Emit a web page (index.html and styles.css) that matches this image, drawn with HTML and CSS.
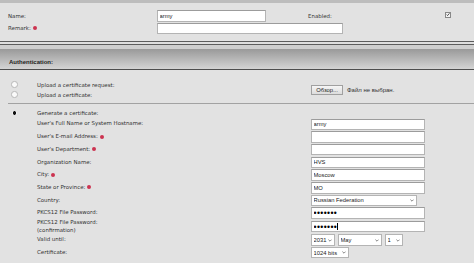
FILE: index.html
```html
<!DOCTYPE html>
<html lang="en">
<head>
    <meta charset="UTF-8">
    <meta name="viewport" content="width=device-width, initial-scale=1.0">
    <title>Certificate</title>
    <link rel="stylesheet" href="styles.css">
</head>
<body>
    <div class="top-strip"></div>
    <!-- общие -->
    <div class="general">
        <div class="row">
            <label class="g-label">Name:</label>
            <input class="field name-field" type="text" value="army">
            <label class="enabled-label">Enabled:</label>
            <span class="checkbox">
                <svg width="5" height="5" viewBox="0 0 5 5"><path d="M0.8 2.6 L2 3.8 L4.3 1" fill="none" stroke="#111" stroke-width="0.9"/></svg>
            </span>
        </div>
        <div class="row">
            <label class="g-label">Remark: <span class="req"></span></label>
            <input class="field remark-field" type="text" value="">
        </div>
    </div>
    <div class="divider"></div>
    <div class="section-head">Authentication:</div>

    <div class="auth">
        <div class="upload">
            <div class="choices">
                <div class="choice">
                    <span class="radio-cell"><input class="radio" type="radio" name="auth"></span>
                    <span>Upload a certificate request:</span>
                </div>
                <div class="choice">
                    <span class="radio-cell"><input class="radio" type="radio" name="auth"></span>
                    <span>Upload a certificate:</span>
                </div>
            </div>
            <div class="file">
                <button class="file-btn">Обзор...</button>
                <span class="file-name">Файл не выбран.</span>
            </div>
        </div>
        <div class="sep"></div>
        <div class="choice gen">
            <span class="radio-cell"><input class="radio" type="radio" name="auth" checked></span>
            <span>Generate a certificate:</span>
        </div>

        <div class="frow">
            <label class="f-label">User's Full Name or System Hostname:</label>
            <input class="field wide" type="text" value="army">
        </div>
        <div class="frow">
            <label class="f-label">User's E-mail Address: <span class="req"></span></label>
            <input class="field wide" type="text" value="">
        </div>
        <div class="frow">
            <label class="f-label">User's Department: <span class="req"></span></label>
            <input class="field wide" type="text" value="">
        </div>
        <div class="frow">
            <label class="f-label">Organization Name:</label>
            <input class="field wide" type="text" value="HVS">
        </div>
        <div class="frow">
            <label class="f-label">City: <span class="req"></span></label>
            <input class="field wide" type="text" value="Moscow">
        </div>
        <div class="frow">
            <label class="f-label">State or Province: <span class="req"></span></label>
            <input class="field wide" type="text" value="MO">
        </div>
        <div class="frow">
            <label class="f-label">Country:</label>
            <span class="sel country">
                <select><option>Russian Federation</option></select>
                <svg class="chev" width="4" height="3" viewBox="0 0 4 3"><path d="M0.4 0.6 L2 2.2 L3.6 0.6" fill="none" stroke="#555" stroke-width="0.7"/></svg>
            </span>
        </div>
        <div class="frow">
            <label class="f-label">PKCS12 File Password:</label>
            <input class="field wide pass" type="password" value="1234567">
        </div>
        <div class="frow tall">
            <label class="f-label">PKCS12 File Password:<br>(confirmation)</label>
            <span class="pass-wrap">
                <input class="field wide pass" type="password" value="1234567">
                <span class="caret"></span>
            </span>
        </div>
        <div class="frow">
            <label class="f-label">Valid until:</label>
            <span class="sel year">
                <select><option>2031</option></select>
                <svg class="chev" width="4" height="3" viewBox="0 0 4 3"><path d="M0.4 0.6 L2 2.2 L3.6 0.6" fill="none" stroke="#555" stroke-width="0.7"/></svg>
            </span>
            <span class="sel month">
                <select><option>May</option></select>
                <svg class="chev" width="4" height="3" viewBox="0 0 4 3"><path d="M0.4 0.6 L2 2.2 L3.6 0.6" fill="none" stroke="#555" stroke-width="0.7"/></svg>
            </span>
            <span class="sel day">
                <select><option>1</option></select>
                <svg class="chev" width="4" height="3" viewBox="0 0 4 3"><path d="M0.4 0.6 L2 2.2 L3.6 0.6" fill="none" stroke="#555" stroke-width="0.7"/></svg>
            </span>
        </div>
        <div class="frow">
            <label class="f-label">Certificate:</label>
            <span class="sel bits">
                <select><option>1024 bits</option></select>
                <svg class="chev" width="4" height="3" viewBox="0 0 4 3"><path d="M0.4 0.6 L2 2.2 L3.6 0.6" fill="none" stroke="#555" stroke-width="0.7"/></svg>
            </span>
        </div>
    </div>
</body>
</html>
```

FILE: styles.css
```css
* {
    margin: 0;
    padding: 0;
    box-sizing: border-box;
}
body {
    background-color: #e2e2e2;
    font-family: "DejaVu Sans", Verdana, sans-serif;
    font-size: 5.45px;
    color: #333;
    overflow: hidden;
}
.top-strip {
    height: 3px;
    background-color: #bdbdbd;
}
/* общие */
.general {
    height: 38px;
    padding: 6.5px 0 0 8px;
}
.row {
    display: flex;
    align-items: center;
    height: 12.5px;
}
.g-label {
    flex: none;
    width: 149px;
    display: flex;
    align-items: center;
}
.field {
    flex: none;
    height: 11.5px;
    border: 1px solid #b4b4b4;
    border-top-color: #9c9c9c;
    background-color: #fff;
    font-family: "Liberation Sans", Arial, sans-serif;
    font-size: 5.8px;
    color: #222;
    padding-left: 1.5px;
    outline: none;
}
.name-field {
    width: 109px;
}
.remark-field {
    width: 186px;
}
.enabled-label {
    flex: none;
    margin-left: 42px;
    width: 137px;
}
.checkbox {
    flex: none;
    width: 6px;
    height: 6px;
    border: 0.7px solid #888;
    background-color: #f4f4f4;
    display: flex;
    align-items: center;
    justify-content: center;
    margin-top: -2px;
}
.req {
    display: inline-block;
    width: 4px;
    height: 4px;
    margin-left: 2px;
    border-radius: 50%;
    background-color: #cc3350;
    position: relative;
    top: -0.5px;
}
/* разделитель */
.divider {
    height: 8px;
    background: linear-gradient(to bottom,
        #5c5c5c 0, #5c5c5c 1.5px,
        #dedede 1.5px, #dedede 3px,
        #5c5c5c 3px, #5c5c5c 4.5px,
        #cecece 4.5px, #cecece 8px);
}
.section-head {
    height: 21px;
    padding: 5.5px 0 0 9px;
    display: flex;
    align-items: center;
    background: linear-gradient(to bottom, #999, #d4d4d4);
    border-bottom: 1px solid #4e4e4e;
    font-family: "Liberation Sans", Arial, sans-serif;
    font-weight: bold;
    font-size: 6px;
    color: #1e1e1e;
}
/* авторизация */
.auth {
    padding: 9.5px 0 0 8px;
}
.upload {
    display: flex;
    align-items: center;
}
.choices {
    width: 303px;
}
.choice {
    display: flex;
    align-items: center;
    height: 10px;
}
.radio-cell {
    width: 29px;
    display: flex;
    padding-left: 3px;
}
.radio {
    appearance: none;
    width: 6.5px;
    height: 6.5px;
    border-radius: 50%;
    border: 0.7px solid #b8b8b8;
    background-color: #fafafa;
}
.radio:checked {
    border-color: #e2e2e2;
    background: radial-gradient(circle, #111 0, #111 1.6px, #f2f2f2 2px);
}
.file {
    display: flex;
    align-items: center;
    font-family: "Liberation Sans", Arial, sans-serif;
    font-size: 6px;
    color: #333;
}
.file-btn {
    width: 32px;
    height: 10px;
    border: 1px solid #a0a0a0;
    background: linear-gradient(to bottom, #f6f6f6, #dcdcdc);
    font-family: "Liberation Sans", Arial, sans-serif;
    font-size: 5.8px;
    color: #222;
    margin-right: 4px;
}
.sep {
    margin-top: 3.5px;
    border-top: 1px solid #a2a2a2;
}
.gen {
    margin-top: 4px;
}
.frow {
    display: flex;
    align-items: center;
    height: 12.7px;
}
.frow.tall {
    height: 14px;
}
.f-label {
    flex: none;
    width: 303px;
    padding-left: 29px;
    display: flex;
    align-items: center;
    line-height: 7.8px;
}
.wide {
    width: 114px;
}
.pass {
    font-size: 8.5px;
    letter-spacing: 0.4px;
    color: #000;
}
.pass-wrap {
    position: relative;
    display: flex;
}
.caret {
    position: absolute;
    left: 25.5px;
    top: 2px;
    width: 0.8px;
    height: 7.5px;
    background-color: #000;
}
.sel {
    flex: none;
    position: relative;
    display: flex;
    height: 11.5px;
    margin-right: 3px;
}
.sel select {
    appearance: none;
    width: 100%;
    height: 100%;
    border: 1px solid #b4b4b4;
    background-color: #fff;
    font-family: "Liberation Sans", Arial, sans-serif;
    font-size: 5.8px;
    color: #222;
    padding-left: 1.5px;
    outline: none;
}
.chev {
    position: absolute;
    right: 3px;
    top: 4.5px;
}
.country {
    width: 106px;
}
.year {
    width: 24px;
}
.month {
    width: 44px;
}
.day {
    width: 18px;
}
.bits {
    width: 38px;
}
```
